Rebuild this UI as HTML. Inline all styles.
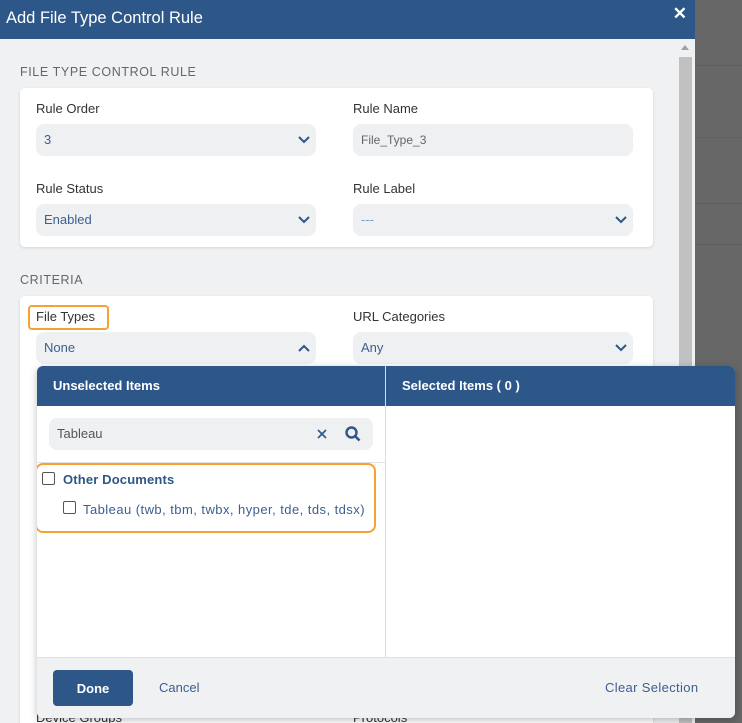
<!DOCTYPE html>
<html><head><meta charset="utf-8"><style>
*{box-sizing:border-box;margin:0;padding:0}
body{width:742px;height:723px;overflow:hidden;position:relative;font-family:"Liberation Sans",sans-serif;background:#676767}
.abs{position:absolute}
.modal{left:0;top:0;width:695px;height:723px;background:#f0f1f3;overflow:hidden}
.hdr{left:0;top:0;width:695px;height:39px;background:#2d5788;color:#fff;font-size:16.5px;line-height:37px;padding-left:6px}
.x{right:8px;top:4px;color:#fff;font-size:17px;font-weight:bold}
.sec{font-size:12.5px;color:#666;letter-spacing:0.6px}
.card{background:#fff;border-radius:5px;box-shadow:0 1px 3px rgba(0,0,0,.12)}
.lbl{font-size:13px;color:#333}
.inp{background:#eff0f2;border-radius:8px;height:32px;font-size:13px;color:#3d5f8f;line-height:32px;padding-left:8px}
.chev{position:absolute;right:5px;top:11px}
.pop{left:37px;top:366px;width:698px;height:352px;background:#fff;border-radius:6px;box-shadow:0 2px 8px rgba(0,0,0,.25);overflow:hidden}
.ph{left:0;top:0;width:698px;height:40px;background:#2d5788;color:#fff;font-size:13px;font-weight:bold;line-height:40px}
.cb{width:13px;height:13px;border:1.3px solid #555;border-radius:2px;background:#fff}
</style></head><body>
<div class="abs" style="left:695px;top:65px;width:47px;height:1px;background:#5e5e5e"></div>
<div class="abs" style="left:695px;top:137px;width:47px;height:1px;background:#606060"></div>
<div class="abs" style="left:695px;top:203px;width:47px;height:1px;background:#5c5c5c"></div>
<div class="abs" style="left:695px;top:244px;width:47px;height:1px;background:#5c5c5c"></div>
<div class="abs modal">
 <div class="abs hdr">Add File Type Control Rule</div>
 <div class="abs x">✕</div>
 <div class="abs" style="left:681px;top:45px;width:0;height:0;border-left:4px solid transparent;border-right:4px solid transparent;border-bottom:5px solid #a0a0a0"></div>
 <div class="abs" style="left:679px;top:57px;width:13px;height:666px;background:#c1c1c1"></div>
 <div class="abs sec" style="left:20px;top:65px">FILE TYPE CONTROL RULE</div>
 <div class="abs card" style="left:20px;top:88px;width:633px;height:159px"></div>
 <div class="abs lbl" style="left:36px;top:101px">Rule Order</div>
 <div class="abs lbl" style="left:353px;top:101px">Rule Name</div>
 <div class="abs inp" style="left:36px;top:124px;width:280px">3<svg class="chev" width="14" height="10" viewBox="0 0 14 10"><path d="M2 2l5 5 5-5" stroke="#2d5788" stroke-width="2" fill="none"/></svg></div>
 <div class="abs inp" style="left:353px;top:124px;width:280px;color:#666;font-size:12px">File_Type_3</div>
 <div class="abs lbl" style="left:36px;top:181px">Rule Status</div>
 <div class="abs lbl" style="left:353px;top:181px">Rule Label</div>
 <div class="abs inp" style="left:36px;top:204px;width:280px">Enabled<svg class="chev" width="14" height="10" viewBox="0 0 14 10"><path d="M2 2l5 5 5-5" stroke="#2d5788" stroke-width="2" fill="none"/></svg></div>
 <div class="abs inp" style="left:353px;top:204px;width:280px;color:#7a9cc6">---<svg class="chev" width="14" height="10" viewBox="0 0 14 10"><path d="M2 2l5 5 5-5" stroke="#2d5788" stroke-width="2" fill="none"/></svg></div>
 <div class="abs sec" style="left:20px;top:273px">CRITERIA</div>
 <div class="abs card" style="left:20px;top:296px;width:633px;height:440px"></div>
 <div class="abs" style="left:28px;top:305px;width:81px;height:25px;border:2px solid #f7a034;border-radius:4px"></div>
 <div class="abs lbl" style="left:36px;top:309px">File Types</div>
 <div class="abs lbl" style="left:353px;top:309px">URL Categories</div>
 <div class="abs inp" style="left:36px;top:332px;width:280px">None<svg class="chev" width="14" height="10" viewBox="0 0 14 10"><path d="M2 8l5-5 5 5" stroke="#2d5788" stroke-width="2" fill="none"/></svg></div>
 <div class="abs inp" style="left:353px;top:332px;width:280px">Any<svg class="chev" width="14" height="10" viewBox="0 0 14 10"><path d="M2 2l5 5 5-5" stroke="#2d5788" stroke-width="2" fill="none"/></svg></div>
 <div class="abs lbl" style="left:36px;top:710px">Device Groups</div>
 <div class="abs lbl" style="left:353px;top:710px">Protocols</div>
</div>
<div class="abs pop">
 <div class="abs ph"><span style="position:absolute;left:16px">Unselected Items</span><span style="position:absolute;left:365px">Selected Items ( 0 )</span></div>
 <div class="abs" style="left:348px;top:40px;width:1px;height:251px;background:#ddd"></div>
 <div class="abs" style="left:348px;top:0;width:1px;height:40px;background:#fff;opacity:.8"></div>
 <div class="abs" style="left:12px;top:52px;width:324px;height:32px;background:#eff0f2;border-radius:8px;font-size:13px;color:#555;line-height:32px;padding-left:8px">Tableau
  <svg style="position:absolute;left:268px;top:11px" width="10" height="10" viewBox="0 0 10 10"><path d="M1 1l8 8M9 1l-8 8" stroke="#2d5788" stroke-width="1.6"/></svg>
  <svg style="position:absolute;left:296px;top:8px" width="16" height="16" viewBox="0 0 16 16"><circle cx="6.5" cy="6.5" r="5" stroke="#2d5788" stroke-width="2.4" fill="none"/><path d="M10 10l4.5 4.5" stroke="#2d5788" stroke-width="2.6"/></svg>
 </div>
 <div class="abs" style="left:0;top:96px;width:348px;height:1px;background:#e2e2e2"></div>
 <div class="abs" style="left:-2px;top:97px;width:341px;height:70px;border:2px solid #f7a034;border-radius:8px"></div>
 <div class="abs cb" style="left:5px;top:106px"></div>
 <div class="abs" style="left:26px;top:106px;font-size:13px;font-weight:bold;color:#2d5788;letter-spacing:0.15px">Other Documents</div>
 <div class="abs cb" style="left:26px;top:135px"></div>
 <div class="abs" style="left:46px;top:136px;font-size:13px;letter-spacing:0.45px;color:#3d5f8f">Tableau (twb, tbm, twbx, hyper, tde, tds, tdsx)</div>
 <div class="abs" style="left:0;top:291px;width:698px;height:61px;background:#f0f1f3;border-top:1px solid #e0e0e0"></div>
 <div class="abs" style="left:16px;top:304px;width:80px;height:36px;background:#2d5788;border-radius:4px;color:#fff;font-size:13px;font-weight:bold;text-align:center;line-height:38px">Done</div>
 <div class="abs" style="left:122px;top:314px;font-size:13px;color:#3d5f8f">Cancel</div>
 <div class="abs" style="left:568px;top:314px;font-size:13px;letter-spacing:0.35px;color:#3d5f8f">Clear Selection</div>
</div>
</body></html>
